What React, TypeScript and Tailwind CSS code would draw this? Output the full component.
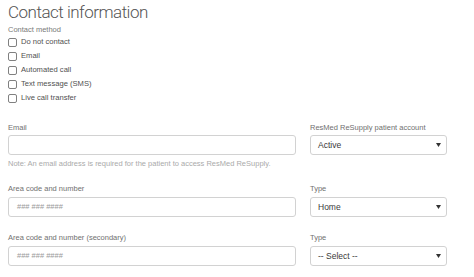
import { useState } from 'react'

const METHODS = [
  'Do not contact',
  'Email',
  'Automated call',
  'Text message (SMS)',
  'Live call transfer',
]

function Caret() {
  return (
    <svg width="5" height="4" viewBox="0 0 5 4" className="shrink-0">
      <path d="M0 0h5L2.5 4z" fill="#333" />
    </svg>
  )
}

function SelectBox({ value }: { value: string }) {
  return (
    <div className="flex h-[20px] w-[137px] items-center justify-between rounded-[3px] border border-[#d2d2d2] bg-white pr-[5px] pl-[7px] text-[8.5px] text-[#3a3a3a]">
      <span>{value}</span>
      <Caret />
    </div>
  )
}

function TextBox({ placeholder }: { placeholder?: string }) {
  return (
    <div className="flex h-[20px] w-[288px] items-center rounded-[3px] border border-[#d2d2d2] bg-white px-[8px] text-[7.5px] text-[#9a9a9a]">
      {placeholder}
    </div>
  )
}

export default function App() {
  const [checked, setChecked] = useState<Record<string, boolean>>({})

  return (
    <div className="min-h-[277px] bg-white px-2 font-['Liberation_Sans',Arial,sans-serif] text-[#707070]">
      <h1 className="pt-[1px] font-['Roboto',sans-serif] text-[17px] leading-[22px] font-light tracking-[-0.5px] text-[#555]">
        Contact information
      </h1>

      <div className="mt-[2px] text-[7.5px] leading-[10px] text-[#7a7a7a]">
        Contact method
      </div>
      <div className="flex flex-col">
        {METHODS.map((m) => (
          <label key={m} className="flex h-[14px] items-center gap-[4px] text-[7.6px] text-[#505050]">
            <span
              onClick={() => setChecked((c) => ({ ...c, [m]: !c[m] }))}
              className="h-[9px] w-[9px] rounded-[2px] border border-[#808080] bg-white"
            />
            {m}
          </label>
        ))}
      </div>

      <div className="mt-[18px] grid grid-cols-[288px_137px] gap-x-[14px]">
        <div className="text-[7.5px] leading-[10px]">Email</div>
        <div className="text-[7.5px] leading-[10px]">ResMed ReSupply patient account</div>
        <div className="mt-[2px]">
          <TextBox />
        </div>
        <div className="mt-[2px]">
          <SelectBox value="Active" />
        </div>
        <div className="col-span-2 mt-[4px] text-[7.5px] leading-[10px] text-[#aaa]">
          Note: An email address is required for the patient to access ResMed ReSupply.
        </div>

        <div className="mt-[15px] text-[7.5px] leading-[10px]">Area code and number</div>
        <div className="mt-[15px] text-[7.5px] leading-[10px]">Type</div>
        <div className="mt-[3px]">
          <TextBox placeholder="### ### ####" />
        </div>
        <div className="mt-[3px]">
          <SelectBox value="Home" />
        </div>

        <div className="mt-[16px] text-[7.5px] leading-[10px]">Area code and number (secondary)</div>
        <div className="mt-[16px] text-[7.5px] leading-[10px]">Type</div>
        <div className="mt-[3px]">
          <TextBox placeholder="### ### ####" />
        </div>
        <div className="mt-[3px]">
          <SelectBox value="-- Select --" />
        </div>
      </div>
    </div>
  )
}
